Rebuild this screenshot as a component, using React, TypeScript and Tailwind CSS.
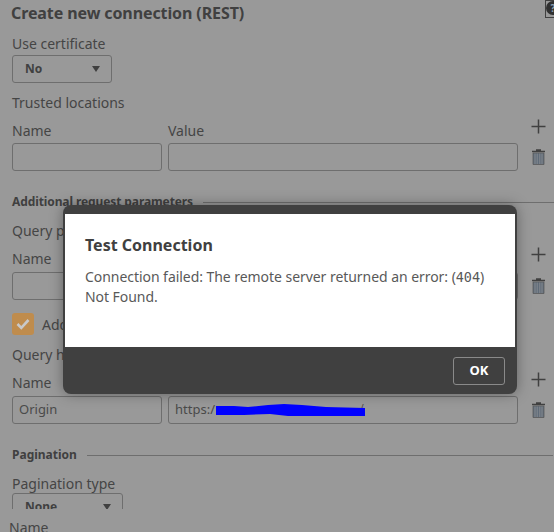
import React from "react";

const font = { fontFamily: '"Noto Sans", Arial, sans-serif' };

function Plus() {
  return (
    <svg width="15" height="15" viewBox="0 0 15 15" className="block">
      <path d="M7.5 0.5v14M0.5 7.5h14" stroke="#404040" strokeWidth="1.5" fill="none" />
    </svg>
  );
}

function Trash() {
  return (
    <svg width="15" height="16" viewBox="0 0 15 16" className="block">
      <path d="M5 1h5M1 2.6h13" stroke="#404040" strokeWidth="1.5" fill="none" />
      <path d="M2 4h11v11.5H2z" fill="#5f6b78" stroke="#5a5a5a" strokeWidth="0.8" />
      <path d="M4 4.5v10.5M6.2 4.5v10.5M8.8 4.5v10.5M11 4.5v10.5" stroke="#8f9296" strokeWidth="0.8" />
    </svg>
  );
}

function Select({ label, width }: { label: string; width: string }) {
  return (
    <div className={`flex h-7 shrink-0 items-center justify-between rounded-[3px] border border-[#6e6e6e] pl-3 pr-[11px] ${width}`}>
      <span className="text-[12px] font-bold text-[#404040]">{label}</span>
      <span className="h-0 w-0 border-x-[4px] border-t-[6px] border-x-transparent border-t-[#404040]" />
    </div>
  );
}

function Field({ children, width }: { children?: React.ReactNode; width: string }) {
  return (
    <div className={`flex h-7 items-center rounded-[3px] border border-[#6e6e6e] px-[6px] text-[13px] text-[#4a4a4a] ${width}`}>
      {children}
    </div>
  );
}

function Label({ children, className = "" }: { children: React.ReactNode; className?: string }) {
  return <div className={`text-[14px] leading-5 text-[#454545] ${className}`}>{children}</div>;
}

function PairRow({ name, value, labelGap }: { name?: string; value?: React.ReactNode; labelGap: string }) {
  return (
    <div className="flex gap-[6px]">
      <div>
        <Label className={labelGap}>Name</Label>
        <Field width="w-[150px]">{name}</Field>
      </div>
      <div>
        <Label className={labelGap}>Value</Label>
        <Field width="w-[350px]">{value}</Field>
      </div>
    </div>
  );
}

function SideIcons({ className = "" }: { className?: string }) {
  return (
    <div className={`ml-[13px] flex w-[15px] flex-col items-center ${className}`}>
      <Plus />
      <Trash />
    </div>
  );
}

function Section({ title, tight }: { title: string; tight?: boolean }) {
  return (
    <div className="flex items-center gap-[10px]">
      <span className={`whitespace-nowrap text-[12px] font-bold leading-4 text-[#404040] ${tight ? "tracking-[-0.1px]" : ""}`}>{title}</span>
      <span className="h-px flex-1 bg-[#6e6e6e]" />
    </div>
  );
}

export default function App() {
  return (
    <div style={font} className="relative h-[532px] w-[554px] overflow-hidden bg-[#999999]">
      <div className="h-[509px] overflow-hidden pl-3">
        <div className="-ml-[1px] pt-[3px] text-[16px] font-bold leading-5 tracking-[-0.1px] text-[#404040]">
          Create new connection (REST)
        </div>
        <Label className="mb-[1px] mt-[11px]">Use certificate</Label>
        <Select label="No" width="w-[100px]" />
        <Label className="mt-[10px]">Trusted locations</Label>

        <div className="mt-2 flex">
          <PairRow labelGap="mb-[2px]" />
          <SideIcons className="-mt-[2px] gap-[15px]" />
        </div>

        <div className="mt-[23px]">
          <Section title="Additional request parameters" tight />
        </div>
        <Label className="mt-[11px]">Query parameters</Label>

        <div className="mt-2 flex">
          <PairRow labelGap="mb-[3px]" />
          <SideIcons className="-mt-[2px] gap-[16px]" />
        </div>

        <div className="mt-[13px] flex h-[22px] items-center gap-2">
          <span className="flex h-[22px] w-[22px] items-center justify-center rounded-[3px] bg-[#bf8c4d]">
            <svg width="14" height="12" viewBox="0 0 14 12">
              <path d="M1.5 6l3.8 3.8L12.5 2" stroke="#c9c9c9" strokeWidth="2.6" fill="none" />
            </svg>
          </span>
          <span className="text-[14px] text-[#454545]">Add query headers</span>
        </div>
        <Label className="mt-[10px]">Query headers</Label>

        <div className="mt-2 flex">
          <PairRow
            labelGap="mb-[3px]"
            name="Origin"
            value={
              <span className="flex items-center">
                https:/
                <svg width="149" height="12" viewBox="0 0 149 12" className="relative z-10 ml-[1px] block">
                  <path
                    d="M0 2l18 0 14 1 20-2 16-1 18 1 24 2 39 1v9H96l-24-1-18-2-26 1-28 0z"
                    fill="#0000ff"
                  />
                </svg>
                <span className="-ml-[5px] -mt-[4px] text-[10px]">/</span>
              </span>
            }
          />
          <SideIcons className="-mt-[1px] gap-[15px]" />
        </div>

        <div className="mt-[23px] pr-[1px]">
          <Section title="Pagination" />
        </div>
        <Label className="mt-[11px]">Pagination type</Label>
        <div className="-mt-[1px]">
          <Select label="None" width="w-[111px]" />
        </div>
      </div>
      <div className="mt-[9px] pl-[9px] text-[14px] leading-5 text-[#454545]">Name</div>

      <div className="absolute left-[63px] top-[205px] w-[454px] overflow-hidden rounded-lg bg-[#404040] shadow-[0_0_14px_rgba(0,0,0,0.35)]">
        <div className="mx-[2px] mt-[9px] h-[133px] bg-white px-5 pt-[19px] text-[#595959]">
          <div className="text-[16px] font-bold leading-6 text-[#404040]">Test Connection</div>
          <div className="mt-[10px] text-[14px] leading-5 tracking-[-0.05px]">
            Connection failed: The remote server returned an error: (<span className="font-['DejaVu_Sans_Mono'] text-[13.5px] leading-none">404</span>) Not Found.
          </div>
        </div>
        <div className="flex h-[47px] items-start justify-end pr-3 pt-[10px]">
          <div className="flex h-7 w-[52px] items-center justify-center rounded-[3px] border border-[#8a8a8a] text-[13px] font-bold text-white">
            OK
          </div>
        </div>
      </div>
      <div className="absolute right-0 top-0 h-[18px] w-[9px] overflow-hidden border border-r-0 border-[#404040]">
        <div className="flex h-[14px] w-[14px] items-center justify-center rounded-full bg-[#303030] text-[10px] font-bold text-[#8aa0b5]">
          ?
        </div>
      </div>
    </div>
  );
}
